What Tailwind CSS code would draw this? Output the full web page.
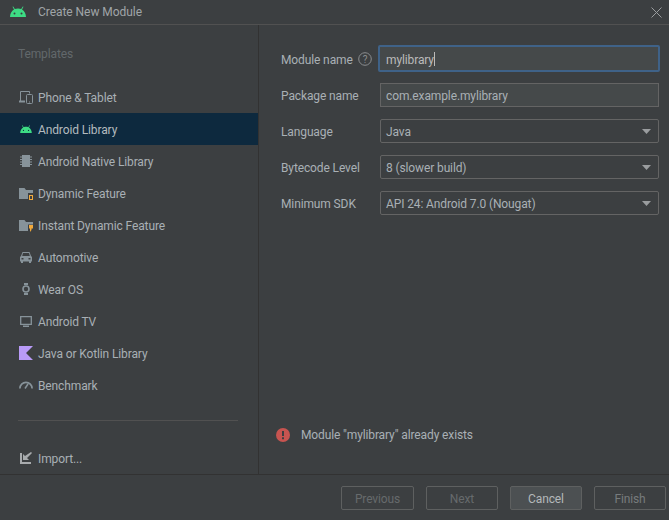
<!DOCTYPE html>
<html lang="en">
<head>
  <meta charset="UTF-8" />
  <title>Create New Module</title>
  <script src="https://cdn.jsdelivr.net/npm/@tailwindcss/browser@4"></script>
</head>
<body class="bg-[#3c3f41]">
  <div class="w-[669px] h-[520px] flex flex-col overflow-hidden bg-[#3c3f41] text-[12px] text-[#a9b0b5] tracking-[-0.12px] font-['Roboto','Liberation_Sans',sans-serif]">

    <!-- Title bar -->
    <div class="h-[25px] shrink-0 flex items-center pl-[10px] pr-[7px] border-b border-[#515151]">
      <svg class="w-[16px] h-[11px] mb-px" viewBox="0 0 16 11"><path fill="#3ddc84" d="M0 11C.1 7.600 1.700 4.900 4 3.500L2.500.8l.7-.4L4.800 3.100C5.800 2.700 6.900 2.500 8 2.500s2.200.2 3.200.6L12.800.4l.7.4L12 3.500c2.300 1.400 3.900 4.100 4 7.500z"/><circle cx="4.500" cy="7.500" r="1" fill="#3c3f41"/><circle cx="11.500" cy="7.500" r="1" fill="#3c3f41"/></svg>
      <span class="ml-[12px] text-[#a0a5a8] tracking-[-0.05px]">Create New Module</span>
      <svg class="ml-auto w-[11px] h-[11px]" viewBox="0 0 11 11"><path d="M.5.500l10 10M10.500.500l-10 10" stroke="#9a9d9f" fill="none"/></svg>
    </div>

    <div class="flex flex-1 min-h-0">
      <!-- Templates sidebar -->
      <div class="w-[259px] shrink-0 border-r border-[#323232] flex flex-col">
        <div class="h-[56px] shrink-0 pl-[18px] pt-[20px] text-[#62686b] leading-[18px]">Templates</div>
        <ul class="leading-[18px]">
          <li class="h-[32px] flex items-center pl-[19px] gap-[5px]">
            <svg class="w-[14px] h-[14px]" viewBox="0 0 14 14"><path fill="none" stroke="#87939a" d="M1.500 11.500v-10h9v2"/><path fill="#87939a" d="M0 10.500h6v2H0z"/><rect x="7.500" y="4.500" width="6" height="9" rx="1" fill="none" stroke="#87939a"/><path fill="#87939a" d="M10 11.500h1v1h-1z"/></svg>
            <span class="pt-[2px]">Phone &amp; Tablet</span>
          </li>
          <li class="h-[32px] flex items-center pl-[20px] gap-[6px] bg-[#0d293e] text-[#b4bbbf]">
            <svg class="w-[12px] h-[8px]" viewBox="0 0 16 11"><path fill="#3ddc84" d="M0 11C.1 7.600 1.700 4.900 4 3.500L2.500.8l.7-.4L4.800 3.100C5.800 2.700 6.900 2.500 8 2.500s2.200.2 3.200.6L12.800.4l.7.4L12 3.500c2.300 1.400 3.900 4.100 4 7.500z"/><circle cx="4.500" cy="7.500" r=".8" fill="#0d293e"/><circle cx="11.500" cy="7.500" r=".8" fill="#0d293e"/></svg>
            <span class="pt-[2px]">Android Library</span>
          </li>
          <li class="h-[32px] flex items-center pl-[20px] gap-[6px]">
            <svg class="w-[12px] h-[12px]" viewBox="0 0 12 12"><path fill="#87939a" d="M2 0h8v12H2zM0 1.500h2v1H0zM0 4h2v1H0zM0 6.500h2v1H0zM0 9h2v1H0zM10 1.500h2v1h-2zM10 4h2v1h-2zM10 6.500h2v1h-2zM10 9h2v1h-2z"/></svg>
            <span class="pt-[2px]">Android Native Library</span>
          </li>
          <li class="h-[32px] flex items-center pl-[19px] gap-[5px]">
            <svg class="w-[14px] h-[14px]" viewBox="0 0 14 14"><path fill="#87939a" d="M0 2h5.500L7 4h7v3H9v6H0z"/><rect x="10.500" y="9.500" width="3" height="4" fill="none" stroke="#f2a93b"/></svg>
            <span class="pt-[2px]">Dynamic Feature</span>
          </li>
          <li class="h-[32px] flex items-center pl-[19px] gap-[5px]">
            <svg class="w-[14px] h-[14px]" viewBox="0 0 14 14"><path fill="#87939a" d="M0 2h5.500L7 4h7v2.500H9V13H0z"/><path fill="#f2a93b" d="M10 7h4v3.500h-1.500v1.500L11 14v-3.500h-1z"/></svg>
            <span class="pt-[2px]">Instant Dynamic Feature</span>
          </li>
          <li class="h-[32px] flex items-center pl-[20px] gap-[6px]">
            <svg class="w-[12px] h-[11px]" viewBox="0 0 12 11"><path fill="#87939a" fill-rule="evenodd" d="M2.500 0h7L11 4l1 1v4.500h-1V11H9V9.500H3V11H1V9.500H0V5l1-1zM3 1 2.200 4h7.600L9 1zM1.500 6v1.500h2V6zm7 0v1.500h2V6z"/></svg>
            <span class="pt-[2px]">Automotive</span>
          </li>
          <li class="h-[32px] flex items-center pl-[22px] gap-[8px]">
            <svg class="w-[8px] h-[12px]" viewBox="0 0 8 12"><path fill="#87939a" d="M2 0h4v2H2zM2 10h4v2H2z"/><circle cx="4" cy="6" r="3" fill="none" stroke="#87939a" stroke-width="1.600"/></svg>
            <span class="pt-[2px]">Wear OS</span>
          </li>
          <li class="h-[32px] flex items-center pl-[20px] gap-[6px]">
            <svg class="w-[12px] h-[11px]" viewBox="0 0 12 11"><path fill="none" stroke="#87939a" stroke-width="1.300" d="M.700.700h10.600v7.600H.700z"/><path fill="#87939a" d="M3 9.500h6V11H3z"/></svg>
            <span class="pt-[2px]">Android TV</span>
          </li>
          <li class="h-[32px] flex items-center pl-[19px] gap-[5px]">
            <svg class="w-[14px] h-[14px]" viewBox="0 0 14 14"><path fill="#b99bf8" d="M0 0h14L7 7l7 7H0z"/></svg>
            <span class="pt-[2px]">Java or Kotlin Library</span>
          </li>
          <li class="h-[32px] flex items-center pl-[19px] gap-[5px]">
            <svg class="w-[14px] h-[14px]" viewBox="0 0 14 14"><path fill="none" stroke="#87939a" stroke-width="1.700" d="M.9 10.500a6.100 6.100 0 0 1 12.200 0"/><path stroke="#87939a" stroke-width="1.500" d="M6 10.500 9 6"/></svg>
            <span class="pt-[2px]">Benchmark</span>
          </li>
        </ul>
        <div class="mx-[18px] w-[220px] h-px mt-[19px] bg-[#515151]"></div>
        <div class="mt-[21px] h-[32px] flex items-center pl-[20px] gap-[6px] leading-[18px]">
          <svg class="w-[12px] h-[12px]" viewBox="0 0 12 12"><path fill="#a8abad" d="M0 1h2v9h9v2H0z"/><path fill="#a8abad" d="M11 0l1 1-5 5 2 2H3V2l2 2z"/></svg>
          <span class="pt-[2px]">Import...</span>
        </div>
      </div>

      <!-- Form -->
      <div class="flex-1 flex flex-col pl-[22px] pr-[9px] leading-[18px]">
        <div class="mt-[20px] flex items-center h-[27px]">
          <span class="w-[97px] flex items-center"><span class="pt-[2px]">Module name</span>
            <svg class="ml-[5px] w-[14px] h-[14px]" viewBox="0 0 14 14"><circle cx="7" cy="7" r="6.300" fill="none" stroke="#8a8d8f"/><text x="7" y="10.500" text-anchor="middle" font-size="10" fill="#8a8d8f">?</text></svg>
          </span>
          <div class="flex-1 h-[27px] flex items-center bg-[#45494a] border-2 border-[#3f6288] rounded-[2px] pl-[6px]">
            <span class="text-[#bbbbbb] pt-[2px]">mylibrary</span><span class="w-px h-[14px] bg-[#bbbbbb]"></span>
          </div>
        </div>
        <div class="mt-[11px] flex items-center h-[24px]">
          <span class="w-[99px] pt-[2px]">Package name</span>
          <div class="flex-1 h-[24px] flex items-center bg-[#45494a] border border-[#646464] pl-[5px] mr-px"><span class="pt-[2px]">com.example.mylibrary</span></div>
        </div>
        <div class="mt-[12px] flex items-center h-[24px]">
          <span class="w-[99px] pt-[2px]">Language</span>
          <div class="flex-1 h-[24px] flex items-center border border-[#646464] rounded-[2px] px-[5px] mr-px">
            <span class="pt-[2px]">Java</span>
            <svg class="ml-auto mr-[2px] w-[9px] h-[5px]" viewBox="0 0 9 5"><path fill="#9a9d9f" d="M0 0h9L4.500 5z"/></svg>
          </div>
        </div>
        <div class="mt-[12px] flex items-center h-[24px]">
          <span class="w-[99px] pt-[2px]">Bytecode Level</span>
          <div class="flex-1 h-[24px] flex items-center border border-[#646464] rounded-[2px] px-[5px] mr-px">
            <span class="pt-[2px]">8 (slower build)</span>
            <svg class="ml-auto mr-[2px] w-[9px] h-[5px]" viewBox="0 0 9 5"><path fill="#9a9d9f" d="M0 0h9L4.500 5z"/></svg>
          </div>
        </div>
        <div class="mt-[12px] flex items-center h-[24px]">
          <span class="w-[99px] pt-[2px]">Minimum SDK</span>
          <div class="flex-1 h-[24px] flex items-center border border-[#646464] rounded-[2px] px-[5px] mr-px">
            <span class="pt-[2px]">API 24: Android 7.0 (Nougat)</span>
            <svg class="ml-auto mr-[2px] w-[9px] h-[5px]" viewBox="0 0 9 5"><path fill="#9a9d9f" d="M0 0h9L4.500 5z"/></svg>
          </div>
        </div>
        <div class="mt-auto mb-[30px] -ml-[5px] flex items-center gap-[11px]">
          <svg class="w-[14px] h-[14px]" viewBox="0 0 14 14"><circle cx="7" cy="7" r="7" fill="#c75450"/><path fill="#3c3f41" d="M6 3h2v5H6zM6 9.300h2v2H6z"/></svg>
          <span>Module "mylibrary" already exists</span>
        </div>
      </div>
    </div>

    <!-- Footer buttons -->
    <div class="h-[46px] shrink-0 border-t border-[#323232] flex items-start justify-end gap-[12px] pt-[11px] pr-[3px]">
      <button class="w-[73px] h-[24px] pt-[2px] border border-[#5e6060] rounded-[2px] text-[#666a6c]">Previous</button>
      <button class="w-[72px] h-[24px] pt-[2px] border border-[#5e6060] rounded-[2px] text-[#666a6c]">Next</button>
      <button class="w-[72px] h-[24px] pt-[2px] border border-[#5e6060] rounded-[2px] bg-[#4c5052] text-[#b4b8ba]">Cancel</button>
      <button class="w-[72px] h-[24px] pt-[2px] border border-[#5e6060] rounded-[2px] text-[#777b7d]">Finish</button>
    </div>
  </div>
</body>
</html>
